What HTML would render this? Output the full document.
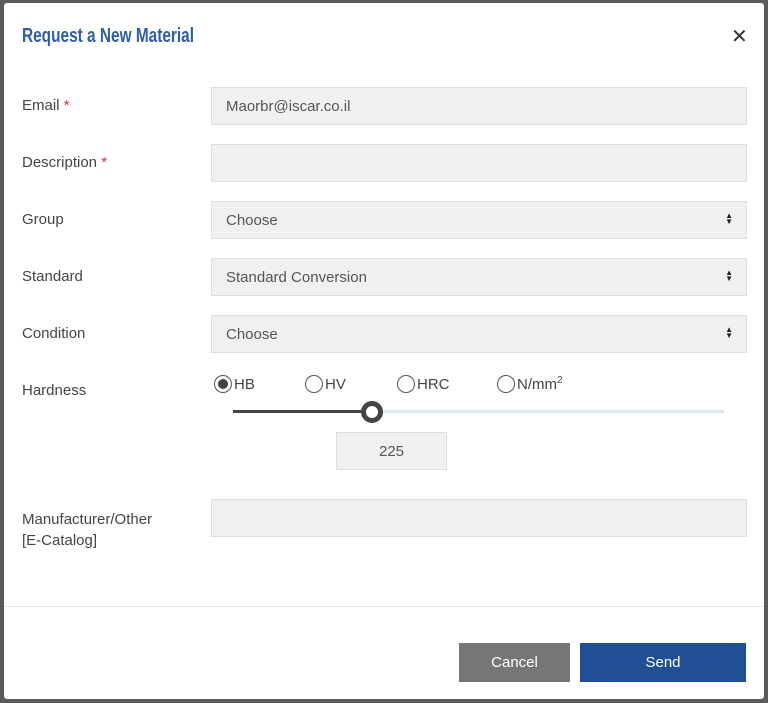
<!DOCTYPE html>
<html><head><style>
body{margin:0;width:768px;height:703px;background:#5a5a5a;font-family:"Liberation Sans",sans-serif;position:relative;overflow:hidden}
.dlg{position:absolute;left:4px;top:3px;width:760px;height:696px;background:#fff;border-radius:3px}
.t{position:absolute;left:18px;top:22px;font-family:"Liberation Sans Narrow","Liberation Sans",sans-serif;font-size:20px;color:#2f5ea6;font-weight:bold;transform:scaleX(0.77);transform-origin:left}
.x{position:absolute;left:727px;top:21px;font-size:20px;color:#333}
.l{position:absolute;left:18px;font-size:15px;color:#444}
.l b{color:#e03040;font-weight:normal}
.in{position:absolute;left:207px;width:536px;height:38px;background:#eff0f0;border:1px solid #dcdfe2;box-sizing:border-box;font-size:15px;color:#555;padding:10px 14px 8px}
.ar{position:absolute;right:13px;top:11px;font-size:8px;line-height:6px;color:#222}
.r{position:absolute;top:372px;font-size:15px;color:#444}
.r i{display:inline-block;width:18px;height:18px;border:1px solid #555;border-radius:50%;box-sizing:border-box;vertical-align:-4px;margin-right:2px;position:relative}
.btn{position:absolute;top:640px;height:39px;color:#fff;font-size:15px;text-align:center;line-height:39px}
</style></head><body>
<div class="dlg">
<div class="t">Request a New Material</div>
<div class="x">✕</div>
<div class="l" style="top:94px">Email <b>*</b></div>
<div class="in" style="top:84px">Maorbr@iscar.co.il</div>
<div class="l" style="top:151px">Description <b>*</b></div>
<div class="in" style="top:141px"></div>
<div class="l" style="top:208px">Group</div>
<div class="in" style="top:198px">Choose<div class="ar">▲<br>▼</div></div>
<div class="l" style="top:265px">Standard</div>
<div class="in" style="top:255px">Standard Conversion<div class="ar">▲<br>▼</div></div>
<div class="l" style="top:322px">Condition</div>
<div class="in" style="top:312px">Choose<div class="ar">▲<br>▼</div></div>
<div class="l" style="top:379px">Hardness</div>
<div class="r" style="left:210px"><i><span style="position:absolute;left:3px;top:3px;width:10px;height:10px;border-radius:50%;background:#444"></span></i>HB</div>
<div class="r" style="left:301px"><i></i>HV</div>
<div class="r" style="left:393px"><i></i>HRC</div>
<div class="r" style="left:493px"><i></i>N/mm<sup style="font-size:10px">2</sup></div>
<div style="position:absolute;left:229px;top:407px;width:140px;height:3px;background:#444"></div>
<div style="position:absolute;left:369px;top:407px;width:351px;height:3px;background:#dde5f3"></div>
<div style="position:absolute;left:357px;top:398px;width:22px;height:22px;box-sizing:border-box;border:5px solid #444;border-radius:50%;background:#fff"></div>
<div style="position:absolute;left:332px;top:429px;width:111px;height:38px;background:#f0f0f0;border:1px solid #dcdfe2;box-sizing:border-box;text-align:center;line-height:37px;font-size:15px;color:#555">225</div>
<div class="l" style="top:506px;line-height:21px">Manufacturer/Other<br>[E-Catalog]</div>
<div class="in" style="top:496px"></div>
<div style="position:absolute;left:0;top:603px;width:760px;height:1px;background:#e8e8e8"></div>
<div class="btn" style="left:455px;width:111px;background:#767676">Cancel</div>
<div class="btn" style="left:576px;width:166px;background:#204f96">Send</div>
</div>
</body></html>
